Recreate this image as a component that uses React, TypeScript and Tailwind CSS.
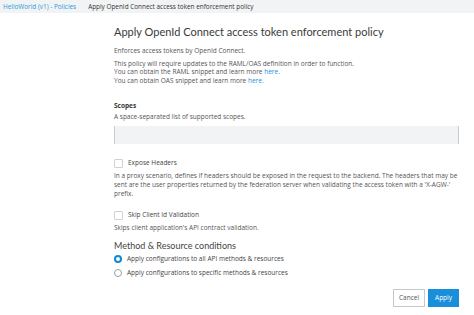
const body = { fontFamily: '"Open Sans", "Noto Sans", sans-serif' };
const heading = { fontFamily: 'Lato, "Noto Sans", sans-serif' };

function Checkbox({ label }: { label: string }) {
  return (
    <label className="flex h-[9px] items-center gap-[5px] text-[6.5px] text-[#444]">
      <span className="h-[9px] w-[9px] rounded-[1px] border border-[#cfd2d6] bg-white" />
      {label}
    </label>
  );
}

function Radio({ label, checked }: { label: string; checked?: boolean }) {
  return (
    <label className="flex h-[10px] items-center gap-[5px] text-[6.5px] text-[#444]">
      {checked ? (
        <span className="h-[8px] w-[8px] rounded-full border-[2.5px] border-[#1088d8] bg-white" />
      ) : (
        <span className="h-[8px] w-[8px] rounded-full border border-[#9aa0a6] bg-white" />
      )}
      {label}
    </label>
  );
}

export default function App() {
  return (
    <div className="min-h-[315px] w-[474px] bg-white" style={body}>
      <nav className="flex h-[13px] items-center gap-[12px] bg-[#f2f3f5] pl-[3px] text-[6.4px]">
        <span className="text-[#2b9ad8]">HelloWorld (v1) - Policies</span>
        <span className="text-[#333]">Apply OpenId Connect access token enforcement policy</span>
      </nav>

      <main className="ml-[114px] w-[345px] text-[#555]">
        <h1 className="mt-[12px] text-[11px] leading-[14px] text-[#3a3a3a]" style={heading}>
          Apply OpenId Connect access token enforcement policy
        </h1>
        <p className="mt-[6.5px] text-[6.5px] leading-[9px]">Enforces access tokens by OpenId Connect.</p>
        <p className="mt-[5px] text-[6.5px] leading-[8.5px]">
          This policy will require updates to the RAML/OAS definition in order to function.
          <br />
          You can obtain the RAML snippet and learn more <a className="text-[#1a8fd9]">here.</a>
          <br />
          You can obtain OAS snippet and learn more <a className="text-[#1a8fd9]">here.</a>
        </p>

        <div className="mt-[15.5px] text-[6.5px] font-bold leading-[9px] text-[#333]">Scopes</div>
        <p className="mt-[2px] text-[6.5px] leading-[9px]">A space-separated list of supported scopes.</p>
        <div className="mt-[5.5px] h-[18px] border-x border-x-[#c9ccd0] bg-[#f2f3f4]" />

        <div className="mt-[14.5px]">
          <Checkbox label="Expose Headers" />
        </div>
        <p className="mt-[3px] text-[6.5px] leading-[9px]">
          In a proxy scenario, defines if headers should be exposed in the request to the backend. The headers that may be
          sent are the user properties returned by the federation server when validating the access token with a 'X-AGW-'
          prefix.
        </p>

        <div className="mt-[13px]">
          <Checkbox label="Skip Client Id Validation" />
        </div>
        <p className="mt-[3px] text-[6.5px] leading-[9px]">Skips client application's API contract validation.</p>

        <div className="mt-[8.5px] text-[9px] leading-[12px] text-[#444]" style={heading}>
          Method &amp; Resource conditions
        </div>
        <div className="mt-[2px] flex flex-col gap-[4px]">
          <Radio checked label="Apply configurations to all API methods & resources" />
          <Radio label="Apply configurations to specific methods & resources" />
        </div>

        <div className="mt-[11px] flex justify-end gap-[3px]">
          <button className="h-[18px] w-[32px] border border-[#c5c8cc] bg-white text-[6.5px] text-[#555]">Cancel</button>
          <button className="h-[18px] w-[31px] bg-[#1a8fd9] text-[6.5px] text-white">Apply</button>
        </div>
      </main>
    </div>
  );
}
